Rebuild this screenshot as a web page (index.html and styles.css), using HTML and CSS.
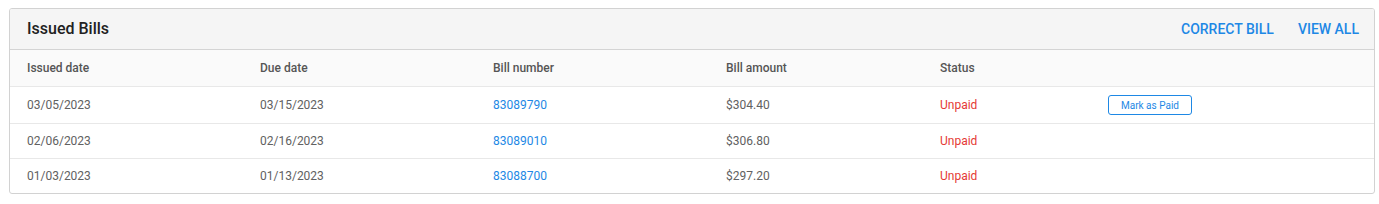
FILE: index.html
```html
<!DOCTYPE html>
<html lang="en">
<head>
    <meta charset="UTF-8">
    <title>Issued Bills</title>
    <link rel="stylesheet" href="styles.css">
</head>
<body>
    <div class="card">
        <div class="card-header">
            <div class="card-title">Issued Bills</div>
            <div class="card-actions">
                <a class="action-link" href="#">Correct Bill</a>
                <a class="action-link" href="#">View All</a>
            </div>
        </div>
        <div class="bills-table">
            <div class="row head-row">
                <div class="cell">Issued date</div>
                <div class="cell">Due date</div>
                <div class="cell">Bill number</div>
                <div class="cell">Bill amount</div>
                <div class="cell">Status</div>
                <div class="cell"></div>
            </div>
            <div class="row first-row">
                <div class="cell">03/05/2023</div>
                <div class="cell">03/15/2023</div>
                <div class="cell"><a class="bill-link" href="#">83089790</a></div>
                <div class="cell">$304.40</div>
                <div class="cell status-unpaid">Unpaid</div>
                <div class="cell"><button class="mark-btn">Mark as Paid</button></div>
            </div>
            <div class="row">
                <div class="cell">02/06/2023</div>
                <div class="cell">02/16/2023</div>
                <div class="cell"><a class="bill-link" href="#">83089010</a></div>
                <div class="cell">$306.80</div>
                <div class="cell status-unpaid">Unpaid</div>
                <div class="cell"></div>
            </div>
            <div class="row last-row">
                <div class="cell">01/03/2023</div>
                <div class="cell">01/13/2023</div>
                <div class="cell"><a class="bill-link" href="#">83088700</a></div>
                <div class="cell">$297.20</div>
                <div class="cell status-unpaid">Unpaid</div>
                <div class="cell"></div>
            </div>
        </div>
    </div>
</body>
</html>
```

FILE: styles.css
```css
body {
    font-family: Roboto, 'Liberation Sans', sans-serif;
    margin: 8px 4px 8px 9px;
    background: white;
    color: #616161;
}

.card {
    border: 1px solid #d2d2d2;
    border-radius: 3px;
    background: white;
    overflow: hidden;
}

.card-header {
    display: flex;
    justify-content: space-between;
    align-items: center;
    height: 39px;
    padding: 0 15px 1px 17px;
    background: #f5f5f5;
    border-bottom: 1px solid #d4d4d4;
}

.card-title {
    font-size: 16px;
    font-weight: 500;
    color: #212121;
}

.card-actions {
    display: flex;
    gap: 24px;
}

.action-link {
    font-size: 14px;
    font-weight: 500;
    text-transform: uppercase;
    color: #1e88e5;
    text-decoration: none;
}

.row {
    display: grid;
    grid-template-columns: 233px 233px 233px 214px 168px 1fr;
    align-items: center;
    height: 34px;
    padding-left: 17px;
    border-bottom: 1px solid #e8e8e8;
    font-size: 12px;
}

.head-row {
    height: 36px;
    background: #fafafa;
    font-weight: 500;
    color: #555;
}

.first-row {
    height: 36px;
}

.last-row {
    border-bottom: none;
}

.bill-link {
    color: #1e88e5;
    text-decoration: none;
}

.status-unpaid {
    color: #e53935;
}

.mark-btn {
    font-family: Roboto, 'Liberation Sans', sans-serif;
    font-size: 10px;
    color: #1e88e5;
    background: white;
    border: 1px solid #1e88e5;
    border-radius: 3px;
    width: 84px;
    height: 20px;
    padding: 0;
    cursor: pointer;
}
```
